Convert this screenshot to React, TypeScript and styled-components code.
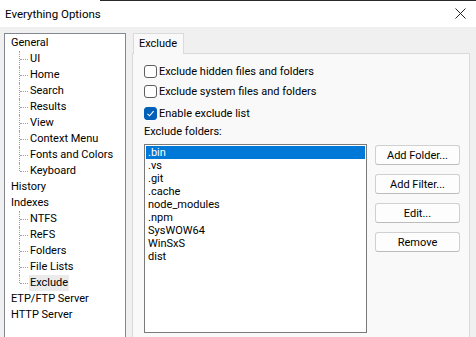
import styled, { createGlobalStyle } from "styled-components";

const GlobalStyle = createGlobalStyle`
  html, body {
    margin: 0;
    padding: 0;
    background: #f0f0f0;
    overflow: hidden;
  }
  body {
    font-family: Roboto, "Noto Sans", "Liberation Sans", sans-serif;
    font-size: 11px;
    color: #000;
  }
`;

// Outer dialog frame
const Window = styled.div`
  width: 476px;
  height: 337px;
  display: flex;
  flex-direction: column;
  background: #f0f0f0;
  overflow: hidden;
`;

// White caption bar with the title and close glyph, a dark edge from the
// screen behind shows along the top
const TitleBar = styled.div`
  height: 27px;
  flex: none;
  background: linear-gradient(#2a2a2a, #2a2a2a) 100px 0 / 100% 1px no-repeat,
    #fff;
  display: flex;
  align-items: center;
  justify-content: space-between;
  padding: 0 10px 0 5px;
  box-sizing: border-box;
`;

const Title = styled.span`
  font-size: 11.5px;
`;

const Body = styled.div`
  flex: 1;
  display: flex;
  align-items: flex-start;
  padding: 6px 0 0 4px;
`;

// Left hand tree of option pages
const Tree = styled.ul`
  list-style: none;
  margin: 0;
  padding: 1px 0 0 0;
  width: 120px;
  height: 320px;
  flex: none;
  background: #fff;
  border: 1px solid #828790;
`;

const TreeRow = styled.li<{ $child?: boolean }>`
  height: 16px;
  display: flex;
  align-items: center;
  padding-left: ${(p) => (p.$child ? "14px" : "5px")};
  white-space: nowrap;
`;

// Dotted connector drawn in front of child rows
const Branch = styled.span<{ $last?: boolean }>`
  position: relative;
  width: 10px;
  height: 16px;
  flex: none;
  &::before {
    content: "";
    position: absolute;
    left: 0;
    top: 0;
    height: ${(p) => (p.$last ? "8px" : "16px")};
    border-left: 1px dotted #a0a0a0;
  }
  &::after {
    content: "";
    position: absolute;
    left: 1px;
    top: 8px;
    width: 8px;
    border-top: 1px dotted #a0a0a0;
  }
`;

const TreeLabel = styled.span<{ $selected?: boolean }>`
  line-height: 16px;
  padding: 0 1px;
  background: ${(p) => (p.$selected ? "#ebebeb" : "transparent")};
`;

const Right = styled.div`
  margin-left: 6px;
  display: flex;
  flex-direction: column;
`;

const TabStrip = styled.div`
  display: flex;
  padding-left: 1px;
  height: 20px;
`;

const Tab = styled.div`
  width: 51px;
  height: 21px;
  box-sizing: border-box;
  background: #f9f9f9;
  border: 1px solid #dadada;
  border-bottom: none;
  padding-left: 5px;
  line-height: 19px;
  position: relative;
  z-index: 1;
`;

const Panel = styled.div`
  width: 338px;
  height: 300px;
  box-sizing: border-box;
  background: #f9f9f9;
  border: 1px solid #dadada;
  padding: 7px 0 0 11px;
`;

const CheckRow = styled.label<{ $gap?: number }>`
  display: flex;
  align-items: center;
  height: 20px;
  gap: 2px;
  margin-top: ${(p) => p.$gap ?? 0}px;
`;

const Box = styled.span<{ $checked?: boolean }>`
  width: 13px;
  height: 13px;
  box-sizing: border-box;
  border-radius: 3px;
  border: 1px solid ${(p) => (p.$checked ? "#005fb8" : "#5d5d5d")};
  background: ${(p) => (p.$checked ? "#005fb8" : "#fff")};
  display: flex;
  align-items: center;
  justify-content: center;
`;

const FieldLabel = styled.div`
  height: 16px;
  line-height: 16px;
  margin-top: 1px;
`;

const ListArea = styled.div`
  display: flex;
  gap: 8px;
  margin-top: 4px;
`;

const ListBox = styled.ul`
  list-style: none;
  margin: 0;
  padding: 1px;
  width: 223px;
  height: 189px;
  box-sizing: border-box;
  background: #fff;
  border: 1px solid #7a7a7a;
`;

const ListItem = styled.li<{ $selected?: boolean }>`
  height: 13px;
  line-height: 13px;
  padding-left: 2px;
  background: ${(p) => (p.$selected ? "#0078d7" : "transparent")};
  color: ${(p) => (p.$selected ? "#fff" : "#000")};
`;

const Buttons = styled.div`
  display: flex;
  flex-direction: column;
  gap: 9px;
  padding-top: 1px;
`;

const Button = styled.button`
  width: 85px;
  height: 20px;
  padding: 0;
  font-family: inherit;
  font-size: 11px;
  color: #000;
  background: #fdfdfd;
  border: 1px solid #d0d0d0;
  border-bottom-color: #bcbcbc;
  border-radius: 3px;
`;

const general = [
  "UI",
  "Home",
  "Search",
  "Results",
  "View",
  "Context Menu",
  "Fonts and Colors",
  "Keyboard",
];
const indexes = ["NTFS", "ReFS", "Folders", "File Lists", "Exclude"];
const folders = [
  ".bin",
  ".vs",
  ".git",
  ".cache",
  "node_modules",
  ".npm",
  "SysWOW64",
  "WinSxS",
  "dist",
];

const Check = () => (
  <svg width="9" height="9" viewBox="0 0 9 9">
    <path d="M1.5 4.8 L3.6 6.8 L7.6 2.2" fill="none" stroke="#fff" strokeWidth="1.1" />
  </svg>
);

const App = (): JSX.Element => {
  const renderChildren = (items: string[], selected?: string) =>
    items.map((item, i) => (
      <TreeRow key={item} $child>
        <Branch $last={i === items.length - 1} />
        <TreeLabel $selected={item === selected}>{item}</TreeLabel>
      </TreeRow>
    ));

  return (
    <>
      <GlobalStyle />
      <Window>
        <TitleBar>
          <Title>Everything Options</Title>
          <svg width="11" height="11" viewBox="0 0 11 11">
            <path d="M0.5 0.5 L10.5 10.5 M10.5 0.5 L0.5 10.5" stroke="#222" strokeWidth="1" />
          </svg>
        </TitleBar>
        <Body>
          <Tree>
            <TreeRow>
              <TreeLabel>General</TreeLabel>
            </TreeRow>
            {renderChildren(general)}
            <TreeRow>
              <TreeLabel>History</TreeLabel>
            </TreeRow>
            <TreeRow>
              <TreeLabel>Indexes</TreeLabel>
            </TreeRow>
            {renderChildren(indexes, "Exclude")}
            <TreeRow>
              <TreeLabel>ETP/FTP Server</TreeLabel>
            </TreeRow>
            <TreeRow>
              <TreeLabel>HTTP Server</TreeLabel>
            </TreeRow>
          </Tree>
          <Right>
            <TabStrip>
              <Tab>Exclude</Tab>
            </TabStrip>
            <Panel>
              <CheckRow>
                <Box />
                Exclude hidden files and folders
              </CheckRow>
              <CheckRow>
                <Box />
                Exclude system files and folders
              </CheckRow>
              <CheckRow $gap={2}>
                <Box $checked>
                  <Check />
                </Box>
                Enable exclude list
              </CheckRow>
              <FieldLabel>Exclude folders:</FieldLabel>
              <ListArea>
                <ListBox>
                  {folders.map((f, i) => (
                    <ListItem key={f} $selected={i === 0}>
                      {f}
                    </ListItem>
                  ))}
                </ListBox>
                <Buttons>
                  <Button>Add Folder...</Button>
                  <Button>Add Filter...</Button>
                  <Button>Edit...</Button>
                  <Button>Remove</Button>
                </Buttons>
              </ListArea>
            </Panel>
          </Right>
        </Body>
      </Window>
    </>
  );
};

export default App;
